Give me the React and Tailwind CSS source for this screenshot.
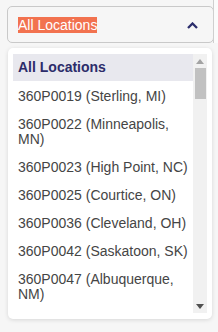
import React from "react";

const locations = [
    "360P0019 (Sterling, MI)",
    "360P0022 (Minneapolis, MN)",
    "360P0023 (High Point, NC)",
    "360P0025 (Courtice, ON)",
    "360P0036 (Cleveland, OH)",
    "360P0042 (Saskatoon, SK)",
    "360P0047 (Albuquerque, NM)",
];

export default function App() {
    return (
        <div
            className="relative w-[218px] h-[332px] overflow-hidden bg-[#f6f6f6] pt-[6px]"
            style={{ fontFamily: '"Liberation Sans", Arial, sans-serif' }}
        >
            {/* neighbouring field edge */}
            <div className="absolute top-0 left-[213px] w-[5px] h-[43px] bg-[#fbfbfb] border-l border-[#cfcfcf]" />

            <div className="ml-[7px] w-[207px] h-[37px] border border-[#c9c9c9] rounded-[5px] flex items-center justify-between pl-[10px] pr-[15px]">
                <span className="bg-[#f2724f] text-white text-[14px] leading-[16px]">All Locations</span>
                <svg width="11" height="7" viewBox="0 0 11 7" className="mt-[1px]">
                    <path d="M1 6 L5.5 1.5 L10 6" fill="none" stroke="#2b2d6c" strokeWidth="2.3" />
                </svg>
            </div>

            <div className="ml-[8px] mt-[5px] w-[204px] h-[271px] bg-white rounded-[5px] shadow-[0_1px_4px_rgba(0,0,0,0.13)] pt-[6px] pb-[6px] pl-[5px] pr-[5px] flex">
                <ul className="w-[180px] h-[259px] overflow-hidden text-[14px] leading-[15px]">
                    <li className="px-[5px] pt-[6px] pb-[6px] bg-[#e8e8ee] font-bold text-[#2c2c6a]">
                        All Locations
                    </li>
                    {locations.map((loc) => (
                        <li key={loc} className="px-[5px] pt-[8px] pb-[5px] text-[#454545]">
                            {loc}
                        </li>
                    ))}
                </ul>

                <div className="w-[14px] h-[259px] bg-[#f1f1f1] flex flex-col items-center">
                    <div className="h-[14px] flex items-center justify-center">
                        <svg width="8" height="5" viewBox="0 0 8 5">
                            <path d="M0 5 L4 0 L8 5 Z" fill="#a3a3a3" />
                        </svg>
                    </div>
                    <div className="w-[11px] h-[31px] bg-[#c1c1c1] ml-[1px]" />
                    <div className="flex-1" />
                    <div className="h-[14px] flex items-center justify-center">
                        <svg width="8" height="5" viewBox="0 0 8 5">
                            <path d="M0 0 L8 0 L4 5 Z" fill="#505050" />
                        </svg>
                    </div>
                </div>
            </div>
        </div>
    );
}
